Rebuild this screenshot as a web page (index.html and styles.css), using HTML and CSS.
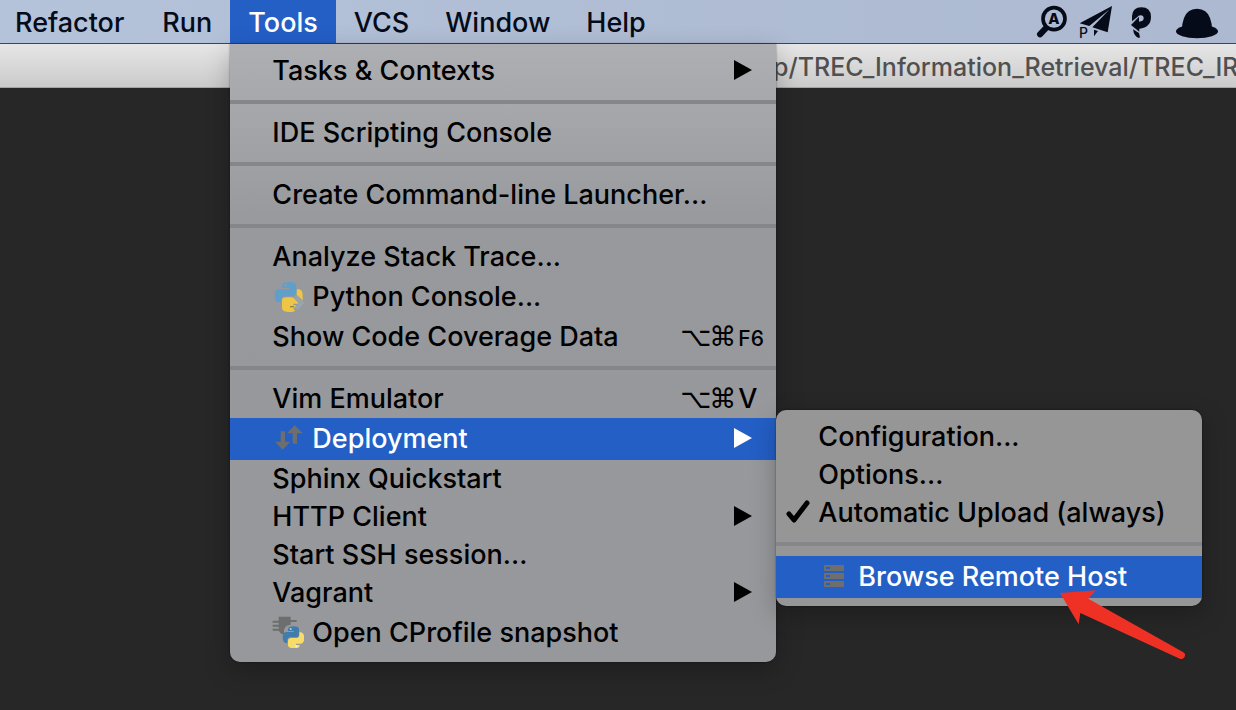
FILE: index.html
```
<!DOCTYPE html>
<html lang="en">
<head>
    <meta charset="UTF-8">
    <meta name="viewport" content="width=device-width, initial-scale=1.0">
    <title>Tools menu</title>
    <link rel="stylesheet" href="styles.css">
</head>
<body>
    <header class="menubar">
        <ul class="menubar-items">
            <li><button class="menubar-button">Refactor</button></li>
            <li><button class="menubar-button">Run</button></li>
            <li class="open">
                <button class="menubar-button" aria-expanded="true">Tools</button>
                <ul class="menu tools-menu">
                    <li><button class="item has-submenu">Tasks &amp; Contexts</button></li>
                    <li class="separator"></li>
                    <li><button class="item">IDE Scripting Console</button></li>
                    <li class="separator"></li>
                    <li><button class="item">Create Command-line Launcher...</button></li>
                    <li class="separator"></li>
                    <li><button class="item">Analyze Stack Trace...</button></li>
                    <li>
                        <button class="item with-icon">
                            <svg class="icon" viewBox="0 0 96 96" aria-hidden="true">
                                <path fill="#edc645" d="M74 28h8q10 2 10 18v14q-2 11-12 11H64v5h10v10q-4 10-21 10-23 0-23-11V62q0-10 12-10h20q12 0 12-12z"/>
                                <path fill="#5f9fca" d="M30 24V18Q30 6 51 6q22 0 22 12v20q0 11-12 11H40q-13 0-13 13v5h-7Q8 66 8 47q0-19 13-19h31v-4z"/>
                                <circle cx="41" cy="16" r="4" fill="#97999c"/>
                                <path d="M54 80h12" stroke="#8d824f" stroke-width="4"/>
                                <path d="M66 46 90 69 69 91" fill="none" stroke="#97999c" stroke-width="14"/>
                                <path d="M70 49 90 69 72 87" fill="none" stroke="#98a5ad" stroke-width="11"/>
                            </svg>
                            Python Console...
                        </button>
                    </li>
                    <li>
                        <button class="item">Show Code Coverage Data
                            <kbd><span class="key">⌥</span><span class="key">⌘</span><span class="fkey">F6</span></kbd>
                        </button>
                    </li>
                    <li class="separator"></li>
                    <li>
                        <button class="item">Vim Emulator
                            <kbd><span class="key">⌥</span><span class="key">⌘</span><span>V</span></kbd>
                        </button>
                    </li>
                    <li class="open">
                        <button class="item with-icon has-submenu" aria-expanded="true">
                            <svg class="icon" viewBox="0 0 96 96" aria-hidden="true">
                                <path fill="#6e6e6e" d="M26 28h13v31h16L32 83 9 59h17zM62 65V34H45L68 10l24 24H75v31z"/>
                            </svg>
                            Deployment
                        </button>
                        <ul class="menu submenu">
                            <li><button class="item">Configuration...</button></li>
                            <li><button class="item">Options...</button></li>
                            <li>
                                <button class="item checked">
                                    <svg class="check" viewBox="0 0 24 24" aria-hidden="true">
                                        <path d="M3 14l5 6L21 3"/>
                                    </svg>
                                    Automatic Upload (always)
                                </button>
                            </li>
                            <li class="separator"></li>
                            <li class="open">
                                <button class="item with-icon">
                                    <svg class="icon" viewBox="0 0 96 96" aria-hidden="true">
                                        <path fill="#6e6e6e" fill-rule="evenodd" d="M18 15h60v18H18zM24 21v6h12v-6zM18 39h60v18H18zM24 45v6h12v-6zM18 63h60v18H18zM24 69v6h12v-6z"/>
                                    </svg>
                                    Browse Remote Host
                                </button>
                            </li>
                        </ul>
                        <svg class="pointer" viewBox="0 0 378 210" aria-hidden="true">
                            <path d="M0 9 108 1 85 26 370 187Q378 192 374 200 369 209 361 207L61 69 56 103z"/>
                        </svg>
                    </li>
                    <li><button class="item">Sphinx Quickstart</button></li>
                    <li><button class="item has-submenu">HTTP Client</button></li>
                    <li><button class="item">Start SSH session...</button></li>
                    <li><button class="item has-submenu">Vagrant</button></li>
                    <li>
                        <button class="item with-icon">
                            <svg class="icon" viewBox="0 0 96 96" aria-hidden="true">
                                <path fill="#6e6e6e" d="M20 2h36v10h18v6H56v8q-17 1-20 16v12H28l-8-10H2v-6h18v-6H2v-6h18v-6H2v-6h18z"/>
                                <path fill="#f8dc68" d="M82 49h5q10 2 10 17 0 16-10 17H72v4h11v2q0 8-17 8-18 0-18-9V76q0-10 11-10h13q10 0 10-10z"/>
                                <path fill="#427cad" d="M48 45v-5q0-9 17-9 16 0 16 9v15q0 9-9 9H56q-10 0-10 11v6h-5Q32 79 32 63q0-14 10-15h23v-3z"/>
                                <circle cx="56" cy="39" r="3" fill="#b9cee0"/>
                                <circle cx="73" cy="91" r="3" fill="#fff6ce"/>
                            </svg>
                            Open CProfile snapshot
                        </button>
                    </li>
                </ul>
            </li>
            <li><button class="menubar-button">VCS</button></li>
            <li><button class="menubar-button">Window</button></li>
            <li><button class="menubar-button">Help</button></li>
        </ul>
        <div class="status">
            <button aria-label="Search">
                <svg width="32" height="36" viewBox="0 0 96 108">
                    <circle cx="54" cy="44" r="33" fill="none" stroke="#050b18" stroke-width="11"/>
                    <path d="M29 73 12 91" stroke="#050b18" stroke-width="18" stroke-linecap="round"/>
                    <text class="lens-letter" x="54" y="59" text-anchor="middle">A</text>
                </svg>
            </button>
            <button aria-label="Paper plane">
                <svg width="34" height="36" viewBox="0 0 102 108">
                    <path d="M99 6 2 58l29 8 61-50-52 54 46 15zM45 77l12 4-12 16z"/>
                    <text class="plane-letter" x="0" y="103">P</text>
                </svg>
            </button>
            <button aria-label="P">
                <svg width="41" height="36" viewBox="-18 0 123 108">
                    <path d="M6 52V36Q8 10 34 10q29 0 29 29 0 31-35 35v9L3 63 27 38v15q14 0 14-10 0-9-9-9-8 0-10 5zM9 76l18 11 3 13-3 2Q12 98 9 76z"/>
                </svg>
            </button>
            <button aria-label="Hat">
                <svg width="42" height="36" viewBox="0 0 126 108">
                    <ellipse cx="63" cy="82" rx="63" ry="21"/>
                    <path d="M18 78q0-21 6-36Q33 15 63 14q30 1 39 28 6 15 6 36z"/>
                </svg>
            </button>
        </div>
    </header>
    <div class="titlebar">
        <span class="title">p/TREC_Information_Retrieval/TREC_IR</span>
    </div>
    <main class="editor"></main>
</body>
</html>
```
FILE: styles.css
```
:root {
    --highlight: #245fc6;
    --ink: #050b18;
    --editor: #272727;
}

* {
    margin: 0;
    padding: 0;
    box-sizing: border-box;
}

body {
    display: flex;
    flex-direction: column;
    min-height: 100vh;
    overflow: hidden;
    font-family: Inter, "Liberation Sans", sans-serif;
    font-size: 27px;
    font-weight: 500;
    background: var(--editor);
}

ul {
    list-style: none;
}

button {
    border: none;
    background: none;
    font: inherit;
    color: inherit;
    white-space: nowrap;
}

svg {
    display: block;
    flex: none;
}

.menubar {
    display: flex;
    justify-content: space-between;
    height: 44px;
    padding-right: 18px;
    border-bottom: 1px solid #35465f;
    background: linear-gradient(to right, #b4c2da, #acb9d0);
    color: var(--ink);
}

.menubar-items {
    display: flex;
}

.menubar-items > li {
    position: relative;
}

.menubar-button {
    height: 43px;
    padding: 2px 18px 0;
}

.menubar-items > li:first-child .menubar-button {
    padding-left: 15px;
    padding-right: 20px;
}

.open > button {
    background: var(--highlight);
    color: #fff;
}

.status {
    display: flex;
    align-items: center;
    gap: 11px;
}

.status svg {
    fill: var(--ink);
}

.lens-letter {
    font-size: 44px;
    font-weight: 800;
}

.plane-letter {
    font-size: 42px;
}

.titlebar {
    height: 44px;
    padding-left: 773px;
    overflow: hidden;
    border-bottom: 1px solid #a5a5a5;
    background: linear-gradient(#e6e6e6, #cbcbcb);
    color: #505050;
    font-size: 25px;
    line-height: 46px;
    white-space: nowrap;
}

.editor {
    flex: 1;
    background: var(--editor);
}

/* menus */
.menu {
    position: absolute;
    z-index: 1;
    padding: 8px 0;
    color: #000;
    box-shadow: 0 8px 26px rgba(0, 0, 0, 0.25), 0 0 2px rgba(0, 0, 0, 0.5);
}

.tools-menu {
    top: 44px;
    left: 0;
    min-width: 546px;
    border-radius: 0 0 10px 10px;
    background: linear-gradient(#adafb2, #97999c 180px, #97989b);
}

.menu > li {
    position: relative;
}

.item {
    display: flex;
    align-items: center;
    width: 100%;
    height: 38px;
    padding: 0 42px 2px;
    text-align: left;
}

.with-icon {
    height: 42px;
    gap: 8px;
}

.icon {
    width: 32px;
    height: 32px;
}

.has-submenu {
    padding-right: 24px;
}

.has-submenu::after {
    content: "";
    margin-left: auto;
    border-left: 18px solid currentColor;
    border-top: 10px solid transparent;
    border-bottom: 10px solid transparent;
}

.separator {
    height: 24px;
    padding: 10px 0;
    background: #858689 content-box;
}

kbd {
    display: flex;
    align-items: baseline;
    width: 96px;
    margin-left: auto;
    margin-right: -42px;
    font-family: inherit;
}

.key {
    width: 29px;
    font-family: "DejaVu Sans", sans-serif;
}

.fkey {
    font-size: 21px;
}

.submenu {
    top: -8px;
    left: 100%;
    border-radius: 10px;
    background: #969696;
}

.checked {
    gap: 8px;
    padding-left: 10px;
    padding-right: 36px;
}

.check {
    width: 24px;
    height: 24px;
    fill: none;
    stroke: #000;
    stroke-width: 5;
    stroke-linecap: round;
    stroke-linejoin: round;
}

.pointer {
    position: absolute;
    z-index: 2;
    top: 172px;
    left: calc(100% + 284px);
    width: 126px;
    height: 70px;
    fill: #ee3124;
}
```
